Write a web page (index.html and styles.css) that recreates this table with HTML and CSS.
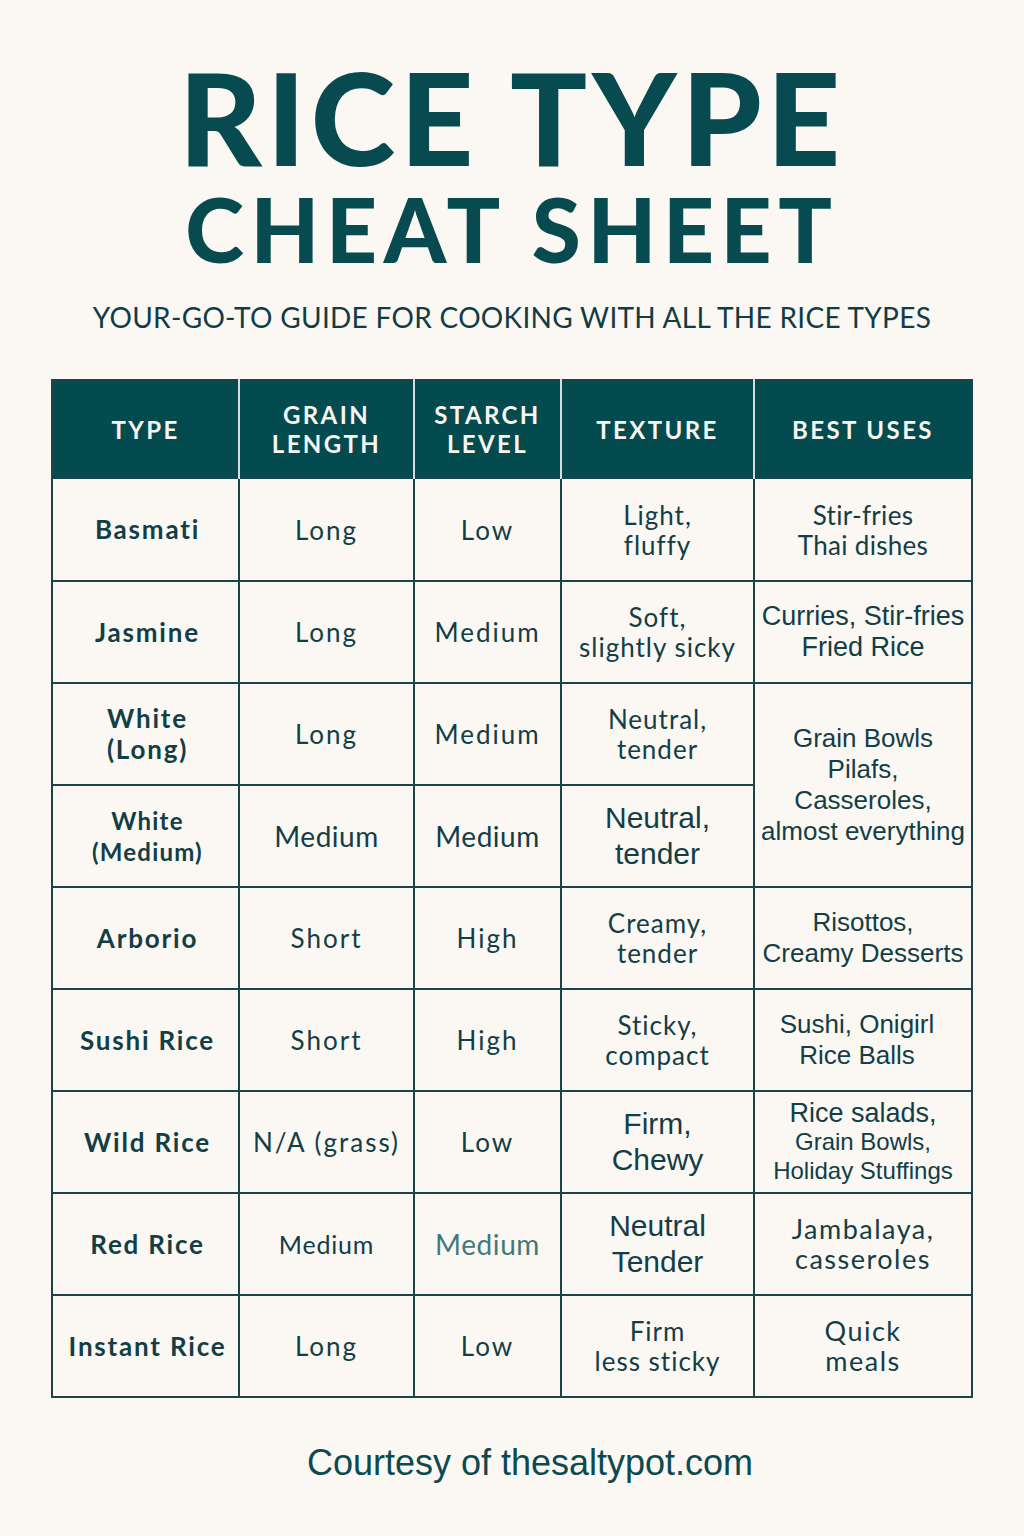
FILE: index.html
```html
<!DOCTYPE html>
<html lang="en">
<head>
<meta charset="utf-8">
<title>Rice Type Cheat Sheet</title>
<link rel="stylesheet" href="styles.css">
</head>
<body>
<main class="page">
  <header class="hero">
    <h1 class="title">
      <span class="title-line1">RICE TYPE</span>
      <span class="title-line2">CHEAT SHEET</span>
    </h1>
    <p class="subtitle">YOUR-GO-TO GUIDE FOR COOKING WITH ALL THE RICE TYPES</p>
  </header>

  <table class="rice-table">
    <colgroup>
      <col class="c-type">
      <col class="c-grain">
      <col class="c-starch">
      <col class="c-texture">
      <col class="c-uses">
    </colgroup>
    <thead>
      <tr>
        <th>TYPE</th>
        <th>GRAIN<br>LENGTH</th>
        <th>STARCH<br>LEVEL</th>
        <th>TEXTURE</th>
        <th>BEST USES</th>
      </tr>
    </thead>
    <tbody>
      <tr class="first-row">
        <td class="type">Basmati</td>
        <td class="val">Long</td>
        <td class="val">Low</td>
        <td class="tex">Light,<br>fluffy</td>
        <td>Stir-fries<br>Thai dishes</td>
      </tr>
      <tr>
        <td class="type">Jasmine</td>
        <td class="val">Long</td>
        <td class="val">Medium</td>
        <td class="tex">Soft,<br>slightly sicky</td>
        <td class="arial wide">Curries, Stir-fries<br>Fried Rice</td>
      </tr>
      <tr>
        <td class="type">White<br>(Long)</td>
        <td class="val">Long</td>
        <td class="val">Medium</td>
        <td class="tex">Neutral,<br>tender</td>
        <td class="arial" rowspan="2">Grain Bowls<br>Pilafs,<br>Casseroles,<br>almost everything</td>
      </tr>
      <tr>
        <td class="type small">White<br>(Medium)</td>
        <td class="val big">Medium</td>
        <td class="val big">Medium</td>
        <td class="arial big">Neutral,<br>tender</td>
      </tr>
      <tr>
        <td class="type">Arborio</td>
        <td class="val">Short</td>
        <td class="val">High</td>
        <td class="tex">Creamy,<br>tender</td>
        <td class="arial">Risottos,<br>Creamy Desserts</td>
      </tr>
      <tr>
        <td class="type">Sushi Rice</td>
        <td class="val">Short</td>
        <td class="val">High</td>
        <td class="tex">Sticky,<br>compact</td>
        <td class="arial shift">Sushi, Onigirl<br>Rice Balls</td>
      </tr>
      <tr>
        <td class="type">Wild Rice</td>
        <td class="val">N/A (grass)</td>
        <td class="val">Low</td>
        <td class="arial big">Firm,<br>Chewy</td>
        <td class="arial tight"><span class="l1">Rice salads,</span><br><span class="l2">Grain Bowls,</span><br><span class="l2">Holiday Stuffings</span></td>
      </tr>
      <tr>
        <td class="type">Red Rice</td>
        <td class="val small-val">Medium</td>
        <td class="val pale">Medium</td>
        <td class="arial big">Neutral<br>Tender</td>
        <td class="spaced">Jambalaya,<br>casseroles</td>
      </tr>
      <tr>
        <td class="type">Instant Rice</td>
        <td class="val">Long</td>
        <td class="val">Low</td>
        <td class="tex">Firm<br>less sticky</td>
        <td class="spaced">Quick<br>meals</td>
      </tr>
    </tbody>
  </table>

  <footer class="credit">Courtesy of thesaltypot.com</footer>
</main>
</body>
</html>
```

FILE: styles.css
```css
html, body {
  margin: 0;
  padding: 0;
}

body {
  background: #fbf7f3;
  color: #0f4047;
  font-family: Lato, "Noto Sans", sans-serif;
}

.page {
  width: 1024px;
  min-height: 1536px;
  display: flex;
  flex-direction: column;
  align-items: center;
  box-sizing: border-box;
  padding-top: 56px;
}

.hero {
  display: flex;
  flex-direction: column;
  align-items: center;
}

.title {
  margin: 0;
  display: flex;
  flex-direction: column;
  align-items: center;
  color: #074a50;
  font-family: Lato, sans-serif;
  font-weight: 900;
}

.title-line1 {
  font-size: 128px;
  line-height: 122px;
  letter-spacing: 5px;
}

.title-line2 {
  font-size: 89px;
  line-height: 92px;
  letter-spacing: 6.6px;
  margin-top: 5px;
}

.subtitle {
  margin: 25px 0 0;
  font-family: Lato, sans-serif;
  font-size: 28px;
  letter-spacing: 0.3px;
  color: #123c44;
  line-height: 34px;
}

.rice-table {
  margin-top: 45px;
  width: 920px;
  table-layout: fixed;
  border-collapse: collapse;
  border: 2px solid #1c4349;
}

.c-type { width: 187px; }
.c-grain { width: 175px; }
.c-starch { width: 147px; }
.c-texture { width: 193px; }
.c-uses { width: 218px; }

.rice-table th {
  background: #044b50;
  color: #f8f5ef;
  height: 96px;
  font-family: Lato, sans-serif;
  font-weight: 700;
  font-size: 24px;
  line-height: 29px;
  letter-spacing: 2.4px;
  border-left: 2px solid #d9dcd8;
  padding: 0;
  text-align: center;
}

.rice-table th:first-child {
  border-left: none;
}

.rice-table td {
  border: 2px solid #1c4349;
  height: 100px;
  padding: 0 2px;
  text-align: center;
  vertical-align: middle;
  font-size: 26px;
  line-height: 30px;
  color: #123e45;
  letter-spacing: 0.3px;
}

.rice-table .first-row td {
  height: 101px;
}

.rice-table td.type {
  font-weight: 700;
  font-size: 26px;
  line-height: 31px;
  letter-spacing: 1.8px;
  padding-left: 6px;
}

.rice-table td.type.small {
  font-size: 24px;
  letter-spacing: 1.2px;
}

.rice-table td.val {
  letter-spacing: 2px;
}

.rice-table td.tex {
  letter-spacing: 1px;
}

.rice-table td.big {
  font-size: 28px;
  line-height: 36px;
  letter-spacing: 0.5px;
}

.rice-table td.arial {
  font-family: "Liberation Sans", Arial, sans-serif;
  font-size: 26px;
  line-height: 31px;
  letter-spacing: 0;
}

.rice-table td.arial.wide {
  font-size: 27px;
}

.rice-table td.arial.big {
  font-size: 30px;
  line-height: 36px;
}

.rice-table td.shift {
  padding-right: 14px;
}

.rice-table td.tight {
  line-height: 28px;
}

.tight .l1 { font-size: 27px; }
.tight .l2 { font-size: 24px; }

.rice-table td.small-val {
  font-size: 25px;
  letter-spacing: 0.8px;
}

.rice-table td.pale {
  color: #3f7a78;
  font-size: 28px;
  letter-spacing: 0.6px;
}

.rice-table td.spaced {
  font-size: 27px;
  letter-spacing: 1.5px;
}

.credit {
  margin-top: 44px;
  margin-left: 36px;
  font-family: "Liberation Sans", Arial, sans-serif;
  font-size: 36px;
  color: #0c4a50;
}
```
